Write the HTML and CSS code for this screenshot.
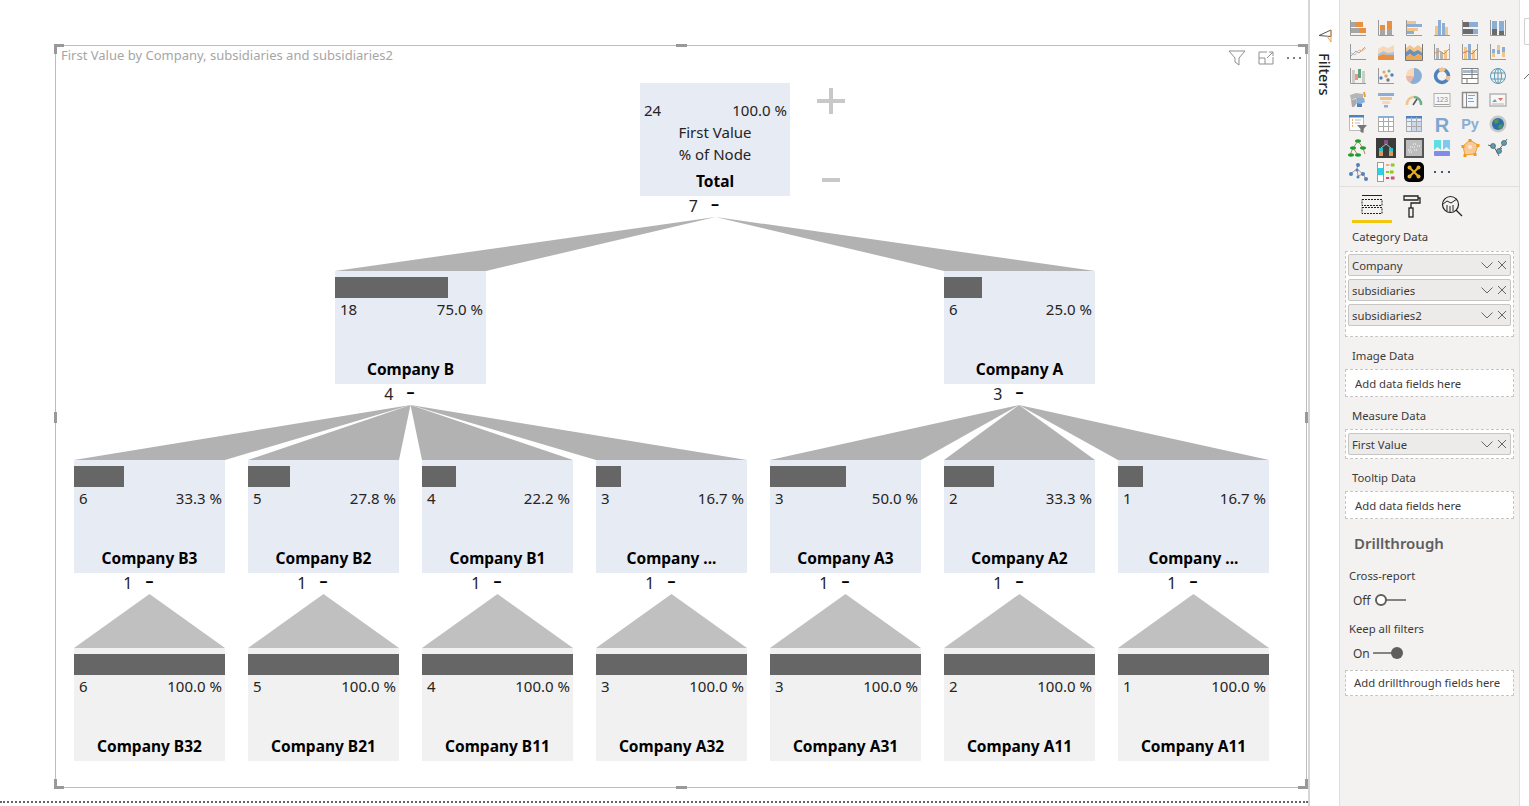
FILE: index.html
```html
<!DOCTYPE html>
<html lang="en">
<head>
  <meta charset="UTF-8">
  <meta name="viewport" content="width=device-width, initial-scale=1.0">
  <title>Report</title>
  <link rel="stylesheet" href="styles.css">
</head>
<body>
  <div class="canvas">
    <div class="visual">
      <span class="handle corner tl"></span>
      <span class="handle corner tr"></span>
      <span class="handle corner bl"></span>
      <span class="handle corner br"></span>
      <span class="handle mid-top"></span>
      <span class="handle mid-bottom"></span>
      <span class="handle mid-left"></span>
      <span class="handle mid-right"></span>

      <div class="visual-header">
        <span class="visual-title">First Value by Company, subsidiaries and subsidiaries2</span>
        <div class="visual-tools">
          <svg width="18" height="16" viewBox="0 0 18 16"><path d="M1 1H17L11 8V15L7 12V8Z" fill="none" stroke="#8f8f8f"/></svg>
          <svg width="16" height="14" viewBox="0 0 16 14"><path d="M9 1H1V13H15V6M1 7H7V13M9 7L15 1M11 1H15V5" fill="none" stroke="#8f8f8f"/></svg>
          <svg width="16" height="14" viewBox="0 0 16 14"><g fill="#7f7f7f"><rect x="1" y="6" width="2" height="2"/><rect x="7" y="6" width="2" height="2"/><rect x="13" y="6" width="2" height="2"/></g></svg>
        </div>
      </div>

      <!-- root -->
      <div class="row row-root">
        <div class="node node-root">
          <div class="values"><span>24</span><span>100.0 %</span></div>
          <div class="legend">First Value</div>
          <div class="legend">% of Node</div>
          <div class="name">Total</div>
        </div>
        <div class="zoom-btns">
          <svg width="30" height="28" viewBox="0 0 30 28"><path d="M15 1V27M1 14H29" stroke="#c8c8c8" stroke-width="4"/></svg>
          <svg width="18" height="4" viewBox="0 0 18 4"><rect width="18" height="4" fill="#c8c8c8"/></svg>
        </div>
      </div>
      <div class="row row-root"><div class="count count-root"><span class="num">7</span><span class="minus">–</span></div></div>
      <svg class="links" width="1250" height="54" viewBox="0 0 1250 54">
        <polygon class="wedge" points="659.5,0 279,54 430,54"/>
        <polygon class="wedge" points="659.5,0 888,54 1039,54"/>
      </svg>

      <!-- level 2 -->
      <div class="row row-two">
        <div class="node">
          <div class="bar" style="width:75%"></div>
          <div class="values"><span>18</span><span>75.0 %</span></div>
          <div class="name">Company B</div>
        </div>
        <div class="node">
          <div class="bar" style="width:25%"></div>
          <div class="values"><span>6</span><span>25.0 %</span></div>
          <div class="name">Company A</div>
        </div>
      </div>
      <div class="row row-two">
        <div class="count"><span class="num">4</span><span class="minus">–</span></div>
        <div class="count"><span class="num">3</span><span class="minus">–</span></div>
      </div>
      <svg class="links" width="1250" height="55" viewBox="0 0 1250 55">
        <polygon class="wedge" points="354.5,0 18,55 169,55"/>
        <polygon class="wedge" points="354.5,0 192,55 343,55"/>
        <polygon class="wedge" points="354.5,0 366,55 517,55"/>
        <polygon class="wedge" points="354.5,0 540,55 691,55"/>
        <polygon class="wedge" points="963,0 714,55 865,55"/>
        <polygon class="wedge" points="963,0 888,55 1039,55"/>
        <polygon class="wedge" points="963,0 1062,55 1213,55"/>
      </svg>

      <!-- level 3 -->
      <div class="row row-seven">
        <div class="node"><div class="bar" style="width:33.3%"></div><div class="values"><span>6</span><span>33.3 %</span></div><div class="name">Company B3</div></div>
        <div class="node"><div class="bar" style="width:27.8%"></div><div class="values"><span>5</span><span>27.8 %</span></div><div class="name">Company B2</div></div>
        <div class="node"><div class="bar" style="width:22.2%"></div><div class="values"><span>4</span><span>22.2 %</span></div><div class="name">Company B1</div></div>
        <div class="node"><div class="bar" style="width:16.7%"></div><div class="values"><span>3</span><span>16.7 %</span></div><div class="name">Company ...</div></div>
        <div class="node"><div class="bar" style="width:50%"></div><div class="values"><span>3</span><span>50.0 %</span></div><div class="name">Company A3</div></div>
        <div class="node"><div class="bar" style="width:33.3%"></div><div class="values"><span>2</span><span>33.3 %</span></div><div class="name">Company A2</div></div>
        <div class="node"><div class="bar" style="width:16.7%"></div><div class="values"><span>1</span><span>16.7 %</span></div><div class="name">Company ...</div></div>
      </div>
      <div class="row row-seven">
        <div class="count"><span class="num">1</span><span class="minus">–</span></div>
        <div class="count"><span class="num">1</span><span class="minus">–</span></div>
        <div class="count"><span class="num">1</span><span class="minus">–</span></div>
        <div class="count"><span class="num">1</span><span class="minus">–</span></div>
        <div class="count"><span class="num">1</span><span class="minus">–</span></div>
        <div class="count"><span class="num">1</span><span class="minus">–</span></div>
        <div class="count"><span class="num">1</span><span class="minus">–</span></div>
      </div>
      <svg class="links" width="1250" height="54" viewBox="0 0 1250 54">
        <polygon class="wedge-leaf" points="93.5,0 18,54 169,54"/>
        <polygon class="wedge-leaf" points="267.5,0 192,54 343,54"/>
        <polygon class="wedge-leaf" points="441.5,0 366,54 517,54"/>
        <polygon class="wedge-leaf" points="615.5,0 540,54 691,54"/>
        <polygon class="wedge-leaf" points="789.5,0 714,54 865,54"/>
        <polygon class="wedge-leaf" points="963.5,0 888,54 1039,54"/>
        <polygon class="wedge-leaf" points="1137.5,0 1062,54 1213,54"/>
      </svg>

      <!-- level 4 -->
      <div class="row row-seven">
        <div class="node leaf"><div class="bar"></div><div class="values"><span>6</span><span>100.0 %</span></div><div class="name">Company B32</div></div>
        <div class="node leaf"><div class="bar"></div><div class="values"><span>5</span><span>100.0 %</span></div><div class="name">Company B21</div></div>
        <div class="node leaf"><div class="bar"></div><div class="values"><span>4</span><span>100.0 %</span></div><div class="name">Company B11</div></div>
        <div class="node leaf"><div class="bar"></div><div class="values"><span>3</span><span>100.0 %</span></div><div class="name">Company A32</div></div>
        <div class="node leaf"><div class="bar"></div><div class="values"><span>3</span><span>100.0 %</span></div><div class="name">Company A31</div></div>
        <div class="node leaf"><div class="bar"></div><div class="values"><span>2</span><span>100.0 %</span></div><div class="name">Company A11</div></div>
        <div class="node leaf"><div class="bar"></div><div class="values"><span>1</span><span>100.0 %</span></div><div class="name">Company A11</div></div>
      </div>
    </div>
    <div class="page-edge"></div>
  </div>

  <div class="filters">
    <svg width="14" height="14" viewBox="0 0 14 14"><path d="M13 1L1 6.5L13 7.5Z" fill="none" stroke="#555"/><path d="M13 1V13L9 7" fill="none" stroke="#e8a33d"/></svg>
    <span class="filters-label">Filters</span>
  </div>

  <div class="pane">
    <div class="viz-grid">
      <!-- row 1 -->
      <svg viewBox="0 0 20 20"><path d="M2.500 2V17.500H18" fill="none" stroke="#999"/><rect x="3" y="4" width="4" height="5" fill="#a6a6a6"/><rect x="7" y="4" width="8" height="5" fill="#e8903f"/><rect x="3" y="10" width="8" height="5" fill="#a6a6a6"/><rect x="11" y="10" width="7" height="5" fill="#e8903f"/></svg>
      <svg viewBox="0 0 20 20"><path d="M2.500 2V17.500H18" fill="none" stroke="#999"/><rect x="4" y="12" width="5" height="5" fill="#a6a6a6"/><rect x="4" y="7" width="5" height="5" fill="#e8903f"/><rect x="11" y="11" width="5" height="6" fill="#a6a6a6"/><rect x="11" y="3" width="5" height="8" fill="#e8903f"/></svg>
      <svg viewBox="0 0 20 20"><path d="M2.500 2V17.500H18" fill="none" stroke="#999"/><rect x="3" y="3" width="9" height="3" fill="#f1c48b"/><rect x="3" y="6" width="15" height="3" fill="#8aaed6"/><rect x="3" y="10" width="11" height="3" fill="#f1c48b"/><rect x="3" y="13" width="7" height="3" fill="#8aaed6"/></svg>
      <svg viewBox="0 0 20 20"><path d="M2 17.500H18" fill="none" stroke="#999"/><rect x="3" y="8" width="3" height="9" fill="#f1c48b"/><rect x="6" y="2" width="3" height="15" fill="#8aaed6"/><rect x="10" y="5" width="3" height="12" fill="#8aaed6"/><rect x="13" y="9" width="3" height="8" fill="#f1c48b"/></svg>
      <svg viewBox="0 0 20 20"><path d="M2.500 2V17.500H18" fill="none" stroke="#999"/><rect x="3" y="4" width="6" height="5" fill="#6b6b6b"/><rect x="9" y="4" width="9" height="5" fill="#8aaed6"/><rect x="3" y="11" width="10" height="5" fill="#6b6b6b"/><rect x="13" y="11" width="5" height="5" fill="#8aaed6"/></svg>
      <svg viewBox="0 0 20 20"><path d="M2.500 2V17.500H18M17.500 2V17" fill="none" stroke="#999"/><rect x="4" y="3" width="5" height="8" fill="#8aaed6"/><rect x="4" y="11" width="5" height="6" fill="#6b6b6b"/><rect x="11" y="3" width="5" height="10" fill="#8aaed6"/><rect x="11" y="13" width="5" height="4" fill="#6b6b6b"/></svg>
      <!-- row 2 -->
      <svg viewBox="0 0 20 20"><path d="M2.500 2V17.500H18" fill="none" stroke="#999"/><path d="M3 14L8 9L11 11L17 5" fill="none" stroke="#8aaed6"/><path d="M3 11L7 13L11 8L14 9L18 6" fill="none" stroke="#eeb78a"/></svg>
      <svg viewBox="0 0 20 20"><path d="M2 7L7 4L12 6L18 3V10L12 11L7 9L2 12Z" fill="#f5d9b8"/><path d="M2 12L7 9L12 11L18 10V13L12 13L7 12L2 14Z" fill="#a9c2df"/><path d="M2 14L7 12L12 13L18 13V18H2Z" fill="#e8903f"/></svg>
      <svg viewBox="0 0 20 20"><path d="M2 6L6 3L10 6L14 3L18 6V11L2 11Z" fill="#f1c48b"/><path d="M2 10L6 7L10 10L14 8L18 11V14L14 12L10 15L6 12L2 15Z" fill="#6d8fb8"/><path d="M2 15L6 12L10 15L14 12L18 14V18H2Z" fill="#eda95a"/><path d="M1.500 2V18.500H18.500V2" fill="none" stroke="#777"/></svg>
      <svg viewBox="0 0 20 20"><path d="M2.500 2V17.500H18" fill="none" stroke="#999"/><path d="M17.500 2V17" stroke="#e8a060"/><rect x="4" y="6" width="3" height="11" fill="#b5b5b5"/><rect x="8" y="10" width="3" height="7" fill="#b5b5b5"/><rect x="12" y="8" width="3" height="9" fill="#f1c48b"/><path d="M3 11L8 9L12 12L17 7" fill="none" stroke="#e8903f"/></svg>
      <svg viewBox="0 0 20 20"><path d="M2.500 2V17.500H18M17.500 2V17" fill="none" stroke="#999"/><rect x="4" y="5" width="3" height="12" fill="#f1c48b"/><rect x="8" y="2" width="3" height="15" fill="#8aaed6"/><rect x="12" y="8" width="3" height="9" fill="#f1c48b"/><path d="M3 11L8 9L12 12L17 7" fill="none" stroke="#e8703f"/></svg>
      <svg viewBox="0 0 20 20"><path d="M2.500 2V17.500H18" fill="none" stroke="#999"/><rect x="4" y="7" width="3" height="4" fill="#8aaed6"/><rect x="4" y="11" width="3" height="4" fill="#f1c48b"/><rect x="9" y="3" width="3" height="5" fill="#f1c48b"/><rect x="9" y="8" width="3" height="4" fill="#8aaed6"/><rect x="14" y="5" width="3" height="5" fill="#8aaed6"/><rect x="14" y="10" width="3" height="5" fill="#f1c48b"/></svg>
      <!-- row 3 -->
      <svg viewBox="0 0 20 20"><path d="M2.500 2V17.500H18" fill="none" stroke="#999"/><rect x="4" y="4" width="3" height="13" fill="#ccc"/><rect x="7" y="8" width="3" height="6" fill="#ea9a7a"/><rect x="10" y="3" width="3" height="9" fill="#59a67f"/><rect x="14" y="5" width="3" height="12" fill="#ccc"/></svg>
      <svg viewBox="0 0 20 20"><path d="M2.500 2V17.500H18" fill="none" stroke="#999"/><circle cx="5" cy="12" r="1.700" fill="#4f81bd"/><circle cx="8" cy="6" r="1.500" fill="#e8a060"/><circle cx="10" cy="10" r="1.700" fill="#e8a060"/><circle cx="13" cy="5" r="1.500" fill="#6fae8e"/><circle cx="12" cy="14" r="1.700" fill="#777"/><circle cx="16" cy="9" r="1.700" fill="#4f81bd"/></svg>
      <svg viewBox="0 0 20 20"><path d="M10 2A8 8 0 1 1 6 17L10 10Z" fill="#8aaed6"/><path d="M10 10L6 17A8 8 0 0 1 2 10Z" fill="#ecb8a8"/><path d="M10 10H2A8 8 0 0 1 10 2Z" fill="#f5d9b8"/></svg>
      <svg viewBox="0 0 20 20"><circle cx="10" cy="10" r="6.500" fill="none" stroke="#4f81bd" stroke-width="3.500"/><path d="M7 4.300A6.500 6.500 0 0 1 13 4.300" fill="none" stroke="#f1c48b" stroke-width="3.500"/><path d="M16.500 10A6.500 6.500 0 0 1 15 14" fill="none" stroke="#f1c48b" stroke-width="3.500"/></svg>
      <svg viewBox="0 0 20 20"><rect x="2" y="2.500" width="16" height="15" fill="#fff" stroke="#7f7f7f"/><rect x="3" y="4" width="14" height="3" fill="#a9b9cc"/><path d="M2 8.500H18M2 12.500H18M7 12.500V18M12 2V12.500" stroke="#7f7f7f" fill="none"/></svg>
      <svg viewBox="0 0 20 20"><circle cx="10" cy="10" r="7.500" fill="none" stroke="#5d9ab5"/><ellipse cx="10" cy="10" rx="3.500" ry="7.500" fill="none" stroke="#5d9ab5"/><path d="M3 7H17M3 13H17M10 2V18" stroke="#5d9ab5" fill="none"/></svg>
      <!-- row 4 -->
      <svg viewBox="0 0 20 20"><path d="M2 5L8 3L15 4V8H8L3 10Z" fill="#b5b5b5"/><path d="M8 8H16L17 12L13 14L9 13Z" fill="#8aaed6"/><path d="M3 10L8 9L9 13L6 17H4Z" fill="#aaa"/><path d="M16 2L17 7" stroke="#e8a33d" stroke-width="2"/><path d="M9 13L14 14V17H9Z" fill="#4f81bd"/></svg>
      <svg viewBox="0 0 20 20"><rect x="2" y="3" width="16" height="3" fill="#8aaed6"/><rect x="4" y="7" width="12" height="3" fill="#f1c48b"/><rect x="6" y="11" width="8" height="3" fill="#f5d9b8"/><rect x="8" y="15" width="4" height="2.500" fill="#8aaed6"/></svg>
      <svg viewBox="0 0 20 20"><path d="M3 15A7 7 0 0 1 10 7" fill="none" stroke="#f1c48b" stroke-width="2.500"/><path d="M10 7A7 7 0 0 1 17 15" fill="none" stroke="#6fae8e" stroke-width="2.500"/><path d="M9 15L13 9" stroke="#555" stroke-width="1.500"/></svg>
      <svg viewBox="0 0 20 20"><rect x="2" y="3.500" width="16" height="13" fill="#f7f7f7" stroke="#b0b0b0"/><text x="10" y="12" font-size="7" text-anchor="middle" fill="#7f93a8" font-family="Liberation Sans">123</text><path d="M3 14.500H17" stroke="#a0a0a0"/></svg>
      <svg viewBox="0 0 20 20"><rect x="2.500" y="2.500" width="15" height="15" fill="#f7f7f7" stroke="#8a8a8a" stroke-width="1.500"/><path d="M6.500 3V17" stroke="#8a8a8a"/><path d="M8 5.500H15M8 8.500H13M8 11.500H14" stroke="#7ea6d2" stroke-width="1.200"/></svg>
      <svg viewBox="0 0 20 20"><rect x="2" y="4" width="16" height="12" fill="#f7f7f7" stroke="#b5b5b5" stroke-width="1.500"/><path d="M4 12L7 9L9 12Z" fill="#6fae8e"/><path d="M10 8H15L12.500 11Z" fill="#e0705f"/><path d="M4 14H16" stroke="#b5b5b5"/></svg>
      <!-- row 5 -->
      <svg viewBox="0 0 20 20"><rect x="1.500" y="1.500" width="14" height="15" fill="#fff" stroke="#bbb"/><rect x="1" y="1" width="15" height="2.500" fill="#4f81bd"/><path d="M4 6H5M4 9H5M4 12H5" stroke="#e8903f" stroke-width="1.500"/><path d="M7 6H13M7 9H12" stroke="#bbb"/><path d="M9 11H19L15.500 15V19L12.500 18V15Z" fill="#777"/></svg>
      <svg viewBox="0 0 20 20"><rect x="2.500" y="2.500" width="15" height="15" fill="#fff" stroke="#aaa"/><rect x="2" y="2" width="16" height="2" fill="#8aaed6"/><path d="M7.500 3V17M12.500 3V17M3 7.500H17M3 12.500H17" stroke="#aaa"/></svg>
      <svg viewBox="0 0 20 20"><rect x="2.500" y="2.500" width="15" height="15" fill="#e8eef6" stroke="#aaa"/><rect x="2" y="2" width="16" height="2.500" fill="#4f81bd"/><rect x="8" y="8" width="9" height="9" fill="#c9d8ea"/><path d="M7.500 3V17M12.500 3V17M3 7.500H17M3 12.500H17" stroke="#aaa"/></svg>
      <svg viewBox="0 0 20 20"><text x="10" y="17.500" font-size="20" font-weight="700" text-anchor="middle" fill="#7ea6d2" font-family="Liberation Sans">R</text></svg>
      <svg viewBox="0 0 20 20"><text x="10" y="15" font-size="14.500" font-weight="700" text-anchor="middle" fill="#8aaed6" font-family="Liberation Sans">Py</text></svg>
      <svg viewBox="0 0 20 20"><circle cx="10" cy="10" r="8.500" fill="#c8c8c8"/><circle cx="10" cy="10" r="6" fill="#2f6da8"/><path d="M6 6L11 5L10 9L7 10ZM11 11L15 10L13 15L10 14Z" fill="#4e9a4e"/></svg>
      <!-- row 6 -->
      <svg viewBox="0 0 20 20"><path d="M10 3L5 10M10 3L15 10M5 10L2 17M5 10L10 17M15 10L17 16" stroke="#a0522d" stroke-width=".7" fill="none"/><g fill="#17a02b"><ellipse cx="10" cy="3" rx="3" ry="1.700"/><ellipse cx="5" cy="10" rx="3" ry="1.700"/><ellipse cx="15" cy="10" rx="3" ry="1.700"/><ellipse cx="3" cy="17" rx="3" ry="1.700"/><ellipse cx="10" cy="17" rx="3" ry="1.700"/></g></svg>
      <svg viewBox="0 0 20 20"><rect width="20" height="20" fill="#3b3b3b"/><rect x="8" y="2" width="4" height="4" fill="#8a4f86"/><path d="M10 6L5 10M10 6L15 10" stroke="#bbb" fill="none"/><rect x="3" y="10" width="4" height="3" fill="#1fc4c4"/><rect x="13" y="10" width="4" height="3" fill="#1fc4c4"/><rect x="3" y="13" width="4" height="5" fill="#d99a55"/><rect x="13" y="13" width="4" height="5" fill="#d99a55"/></svg>
      <svg viewBox="0 0 20 20"><rect x="1" y="1" width="18" height="18" fill="#bdbdbd" stroke="#555" stroke-width="2"/><path d="M9 6H12M13 8H16M6 9H11M4 12H8M10 12H13M5 14H9" stroke="#fff" stroke-dasharray="1 1"/></svg>
      <svg viewBox="0 0 20 20"><path d="M2 2H9V12L5.500 9L2 12Z" fill="#5fdde0"/><path d="M11 2H18V12L14.500 9L11 12Z" fill="#7fc9f0"/><rect x="2" y="13" width="16" height="5" rx="1" fill="#7d8de8"/></svg>
      <svg viewBox="0 0 20 20"><path d="M10 2L18 7L15 16L5 17L3 8Z" fill="#f6c99b" stroke="#f0a030"/><g fill="#f09a1a"><rect x="8.500" y="1" width="3" height="3"/><rect x="16.500" y="6" width="3" height="3"/><rect x="13.500" y="15" width="3" height="3"/><rect x="3.500" y="16" width="3" height="3"/><rect x="1.500" y="7" width="3" height="3"/></g><circle cx="10" cy="9" r="2" fill="#fbe6d0"/></svg>
      <svg viewBox="0 0 20 20"><path d="M0 7L6 9L9 14L17 4M14 10L9 14L11 18M17 4L19 1" stroke="#666" fill="none"/><circle cx="5" cy="8" r="2.500" fill="#4fa3b8" stroke="#555" stroke-width=".7"/><circle cx="16" cy="5" r="2.500" fill="#4fa3b8" stroke="#555" stroke-width=".7"/><circle cx="11" cy="13" r="2.500" fill="#4fa3b8" stroke="#555" stroke-width=".7"/></svg>
      <!-- row 7 -->
      <svg viewBox="0 0 20 20"><path d="M2 12L9 7L10 2M9 7L15 12L18 17M9 7L10 14M15 12L10 14" stroke="#8a6d6d" stroke-width=".7" fill="none"/><g fill="#4f81bd"><circle cx="3" cy="12" r="2"/><circle cx="10" cy="3" r="2"/><circle cx="9" cy="8" r="1.500"/><circle cx="15" cy="12" r="2"/><circle cx="18" cy="17" r="2"/><circle cx="10" cy="15" r="1.500"/></g></svg>
      <svg viewBox="0 0 20 20"><rect x="1.500" y="0.500" width="6" height="19" fill="#fff" stroke="#999"/><rect x="2" y="6" width="5" height="7" fill="#30d0e0"/><path d="M10 3H18M10 10H18M10 16H18" stroke="#c8c8c8"/><rect x="15" y="1.500" width="3.500" height="3" fill="#8ac926"/><rect x="10" y="2" width="3" height="2" fill="#f0b070"/><rect x="14" y="8.500" width="3.500" height="3" fill="#8ac926"/><rect x="10" y="9" width="3" height="2" fill="#8ac926"/><rect x="15" y="14.500" width="3.500" height="3" fill="#d0506f"/><rect x="10" y="15" width="3" height="2" fill="#d0506f"/></svg>
      <svg viewBox="0 0 20 20"><rect width="20" height="20" rx="5" fill="#000"/><path d="M6 6L14 14M14 6L6 14" stroke="#e8b020" stroke-width="2"/><g fill="#e8b020"><circle cx="5.500" cy="5.500" r="2"/><circle cx="14.500" cy="5.500" r="2"/><circle cx="5.500" cy="14.500" r="2"/><circle cx="14.500" cy="14.500" r="2"/></g></svg>
      <svg viewBox="0 0 20 20"><g fill="#3a5a80"><rect x="2" y="9" width="2" height="2"/><rect x="9" y="9" width="2" height="2"/><rect x="16" y="9" width="2" height="2"/></g></svg>
    </div>

    <div class="pane-tabs">
      <div class="tab tab-active">
        <svg width="22" height="20" viewBox="0 0 22 20"><path d="M1 .5H21" stroke="#222"/><path d="M1 4.500H21V10.500H1ZM1 12.500H21V18.500H1Z" fill="none" stroke="#222" stroke-dasharray="2 1"/></svg>
      </div>
      <div class="tab">
        <svg width="20" height="24" viewBox="0 0 20 24"><path d="M2 1H16V5H2ZM16 3H18V8H9V13" fill="none" stroke="#222" stroke-width="1.300"/><rect x="7" y="13" width="4" height="9" fill="none" stroke="#222" stroke-width="1.300"/></svg>
      </div>
      <div class="tab">
        <svg width="22" height="22" viewBox="0 0 22 22"><circle cx="9.500" cy="9.500" r="8" fill="none" stroke="#222" stroke-width="1.200"/><path d="M15 15L21 21" stroke="#222" stroke-width="1.300"/><path d="M2 9L6 6L10 8L16 4M6 10V16M9 11V17M12 10V16" fill="none" stroke="#222"/></svg>
      </div>
    </div>

    <div class="fields">
      <div class="field-label label-first">Category Data</div>
      <div class="well well-filled">
        <div class="pill"><span>Company</span><svg width="26" height="10" viewBox="0 0 26 10"><path d="M.5 2.500L6 8L11.500 2.500M17 1L25 9M25 1L17 9" fill="none" stroke="#666"/></svg></div>
        <div class="pill"><span>subsidiaries</span><svg width="26" height="10" viewBox="0 0 26 10"><path d="M.5 2.500L6 8L11.500 2.500M17 1L25 9M25 1L17 9" fill="none" stroke="#666"/></svg></div>
        <div class="pill"><span>subsidiaries2</span><svg width="26" height="10" viewBox="0 0 26 10"><path d="M.5 2.500L6 8L11.500 2.500M17 1L25 9M25 1L17 9" fill="none" stroke="#666"/></svg></div>
      </div>
      <div class="field-label label-gap">Image Data</div>
      <div class="well well-empty">Add data fields here</div>
      <div class="field-label label-gap">Measure Data</div>
      <div class="well well-single">
        <div class="pill"><span>First Value</span><svg width="26" height="10" viewBox="0 0 26 10"><path d="M.5 2.500L6 8L11.500 2.500M17 1L25 9M25 1L17 9" fill="none" stroke="#666"/></svg></div>
      </div>
      <div class="field-label label-gap">Tooltip Data</div>
      <div class="well well-empty">Add data fields here</div>

      <div class="section-title">Drillthrough</div>
      <div class="toggle-label">Cross-report</div>
      <div class="toggle-row">
        <span>Off</span>
        <svg width="32" height="14" viewBox="0 0 32 14"><path d="M12 7H32" stroke="#605e5c" stroke-width="1.500"/><circle cx="7" cy="7" r="5" fill="#fff" stroke="#605e5c" stroke-width="2"/></svg>
      </div>
      <div class="toggle-label">Keep all filters</div>
      <div class="toggle-row">
        <span>On</span>
        <svg width="32" height="14" viewBox="0 0 32 14"><path d="M0 7H20" stroke="#605e5c" stroke-width="1.500"/><circle cx="24" cy="7" r="6" fill="#605e5c"/></svg>
      </div>
      <div class="well well-empty well-drill">Add drillthrough fields here</div>
    </div>
  </div>

  <div class="strip">
    <div class="strip-box"></div>
    <svg class="strip-arrow" width="8" height="8" viewBox="0 0 8 8"><path d="M0 6L5 1" stroke="#666" fill="none"/></svg>
  </div>
</body>
</html>
```

FILE: styles.css
```css
* {
  box-sizing: border-box;
}
body {
  display: flex;
  width: 1529px;
  height: 806px;
  margin: 0;
  overflow: hidden;
  background-color: #fff;
  color: #252423;
  font-family: "Noto Sans", "Open Sans", sans-serif;
}

/* canvas */
.canvas {
  width: 1308px;
  flex-shrink: 0;
}
.visual {
  position: relative;
  width: 1252px;
  height: 743px;
  margin: 45px 0 0 55px;
  border: 1px solid #bdbdbd;
}
.page-edge {
  margin-top: 13px;
  border-top: 2px dotted #666;
}
.handle {
  position: absolute;
  background-color: #999;
}
.corner {
  width: 10px;
  height: 10px;
  background-color: transparent;
  border: 0 solid #999;
}
.tl { left: -2px; top: -2px; border-width: 3px 0 0 3px; }
.tr { right: -2px; top: -2px; border-width: 3px 3px 0 0; }
.bl { left: -2px; bottom: -2px; border-width: 0 0 3px 3px; }
.br { right: -2px; bottom: -2px; border-width: 0 3px 3px 0; }
.mid-top, .mid-bottom {
  left: 620px;
  width: 11px;
  height: 3px;
}
.mid-top { top: -2px; }
.mid-bottom { bottom: -2px; }
.mid-left, .mid-right {
  top: 366px;
  width: 3px;
  height: 11px;
}
.mid-left { left: -2px; }
.mid-right { right: -2px; }

.visual-header {
  display: flex;
  justify-content: space-between;
  height: 37px;
  padding: 0 4px 0 5px;
}
.visual-title {
  color: #a6a6a6;
  font-size: 13px;
  line-height: 18px;
}
.visual-tools {
  display: flex;
  align-items: center;
  gap: 12px;
  height: 24px;
}

/* tree */
.row {
  display: flex;
}
.row-root {
  margin-left: 584px;
  gap: 26px;
}
.row-two {
  margin-left: 279px;
  gap: 458px;
}
.row-seven {
  margin-left: 18px;
  gap: 23px;
}
.node {
  display: flex;
  flex-direction: column;
  width: 151px;
  height: 113px;
  background-color: #e7ebf4;
  font-size: 15px;
  color: #252423;
}
.node-root {
  width: 150px;
}
.leaf {
  background-color: #f1f1f1;
}
.bar {
  width: 100%;
  height: 21px;
  margin-top: 6px;
  background-color: #666;
}
.values {
  display: flex;
  justify-content: space-between;
  margin-top: 1px;
  padding: 0 3px 0 5px;
  line-height: 20px;
}
.name {
  margin-top: auto;
  padding-bottom: 5px;
  text-align: center;
  font-size: 15.5px;
  font-weight: 700;
  color: #000;
  line-height: 20px;
}
.node-root .values {
  margin-top: 17px;
  padding-left: 4px;
}
.legend {
  margin-top: 2px;
  text-align: center;
  line-height: 20px;
}
.zoom-btns {
  display: flex;
  flex-direction: column;
  align-items: center;
  justify-content: space-between;
  width: 30px;
  height: 113px;
  padding: 4px 0 14px;
}
.count {
  display: grid;
  grid-template-columns: 1fr auto 1fr;
  width: 151px;
  height: 21px;
  font-size: 16px;
  line-height: 21px;
  color: #252423;
}
.count-root {
  width: 150px;
}
.num {
  justify-self: end;
  padding-right: 13px;
}
.minus {
  font-size: 16px;
  font-weight: 700;
  line-height: 14px;
  color: #000;
}
.links {
  display: block;
}
.wedge {
  fill: #b2b2b2;
}
.wedge-leaf {
  fill: #c0c0c0;
}

/* filters */
.filters {
  display: flex;
  flex-direction: column;
  align-items: center;
  width: 31px;
  flex-shrink: 0;
  padding-top: 29px;
  border-left: 2px solid #d6d6d6;
}
.filters-label {
  margin-top: 10px;
  writing-mode: vertical-rl;
  font-size: 14.5px;
  font-weight: 500;
  line-height: 16px;
}

/* viz pane */
.pane {
  width: 181px;
  flex-shrink: 0;
  border-left: 1px solid #e1dfdd;
  border-right: 1px solid #e1dfdd;
  background-color: #f3f2f1;
  font-size: 11.3px;
  color: #3b3a39;
}
.viz-grid {
  display: grid;
  grid-template-columns: repeat(6, 28px);
  grid-auto-rows: 24px;
  height: 187px;
  padding: 18px 0 0 4px;
  border-bottom: 1px solid #e1dfdd;
}
.viz-grid svg {
  display: block;
  width: 20px;
  height: 20px;
  margin: 0 4px;
}
.pane-tabs {
  display: flex;
  height: 36px;
  padding-left: 12px;
}
.tab {
  display: flex;
  justify-content: center;
  width: 40px;
  height: 36px;
  padding-top: 8px;
}
.tab-active {
  border-bottom: 3px solid #f2c80f;
}
.fields {
  padding: 0 5px;
}
.field-label {
  margin: 0 0 5px 7px;
  line-height: 16px;
}
.label-first {
  margin-top: 6px;
  margin-bottom: 6px;
}
.label-gap {
  margin-top: 11px;
}
.well {
  border: 1px dashed #c8c6c4;
  background-color: #fff;
}
.well-filled {
  display: flex;
  flex-direction: column;
  gap: 3px;
  height: 86px;
  padding: 2px;
}
.well-single {
  height: 30px;
  padding: 3px 2px;
}
.well-empty {
  height: 28px;
  padding-left: 9px;
  line-height: 27px;
}
.pill {
  display: flex;
  align-items: center;
  justify-content: space-between;
  height: 22px;
  padding: 0 3px 0 3px;
  border: 1px solid #c8c6c4;
  border-radius: 2px;
  background-color: #edebe9;
}
.section-title {
  margin: 12px 0 0 9px;
  font-size: 15px;
  font-weight: 600;
  line-height: 24px;
  color: #605e5c;
}
.toggle-label {
  margin: 13px 0 0 4px;
  line-height: 16px;
}
.toggle-row {
  display: flex;
  align-items: center;
  gap: 3px;
  height: 16px;
  margin: 8px 0 0 8px;
  font-size: 12px;
}
.well-drill {
  height: 26px;
  margin-top: 9px;
  padding-left: 8px;
  line-height: 24px;
}

/* right edge */
.strip {
  flex-grow: 1;
  padding-top: 18px;
}
.strip-box {
  height: 27px;
  margin-left: 4px;
  border: 1px solid #d0d0d0;
  border-right: 0;
  border-radius: 2px 0 0 2px;
}
.strip-arrow {
  display: block;
  margin: 28px 0 0 4px;
}
```
